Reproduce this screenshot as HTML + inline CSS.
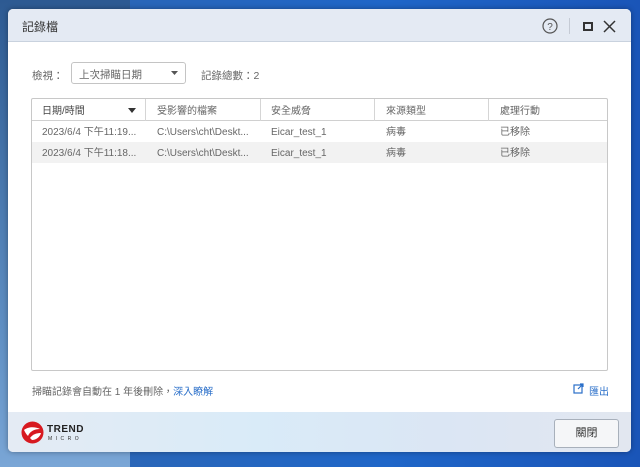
<!DOCTYPE html>
<html><head><meta charset="utf-8"><style>
*{margin:0;padding:0;box-sizing:border-box}
body{width:640px;height:467px;overflow:hidden;position:relative;font-family:"Liberation Sans","Noto Sans CJK TC",sans-serif;background:linear-gradient(90deg,#1c4f9a 0,#2a66b8 20%,#1f66c8 60%,#1a55b8 100%)}
.strip{position:absolute;left:0;top:0;width:130px;height:467px;background:linear-gradient(180deg,#2d5a92,#5f8fc3 70%,#7aa6d6)}
.dlg{position:absolute;left:8px;top:9px;width:623px;height:443px;background:#fff;border-radius:5px;overflow:hidden;box-shadow:0 0 6px rgba(0,0,0,.35)}
.title{height:33px;background:#e4eaf3;border-bottom:1px solid #c9d2de;font-size:12px;color:#333;padding:9px 0 0 14px}
.foot{position:absolute;left:0;top:403px;width:623px;height:40px;background:linear-gradient(90deg,#e4ebf4,#d9ebf8 40%,#dbe6f4 70%,#e2e7f0)}
.t{position:absolute;font-size:10.5px;color:#666;white-space:nowrap}
.tbl{position:absolute;left:23px;top:89px;width:577px;height:273px;border:1px solid #c8c8c8;border-radius:2px}
.hd{height:22px;border-bottom:1px solid #d0d0d0;position:relative}
.row{height:21px;position:relative}
.c{position:absolute;top:5px;font-size:10px;line-height:13px;height:13px;color:#666;white-space:nowrap}
.hd .c{top:6px}
.sep{position:absolute;top:0;width:1px;height:22px;background:#d5d5d5}
</style></head><body>
<div class="strip"></div>
<div class="dlg">
<div class="title">記錄檔</div>
<svg style="position:absolute;left:534px;top:9px" width="16" height="16"><circle cx="8" cy="8" r="7" fill="none" stroke="#555" stroke-width="1.2"/><text x="8" y="12" font-size="10" text-anchor="middle" fill="#555" font-family="Liberation Sans">?</text></svg>
<div style="position:absolute;left:561px;top:9px;width:1px;height:16px;background:#c5cbd5"></div>
<div style="position:absolute;left:575px;top:13px;width:10px;height:9px;border:2px solid #333"></div>
<svg style="position:absolute;left:595px;top:11px" width="13" height="13"><path d="M1 1L12 12M12 1L1 12" stroke="#333" stroke-width="1.5"/></svg>
<div class="t" style="left:24px;top:59px">檢視：</div>
<div style="position:absolute;left:63px;top:53px;width:115px;height:22px;border:1px solid #c4c4c4;border-radius:3px"></div>
<div class="t" style="left:71px;top:58px">上次掃瞄日期</div>
<svg style="position:absolute;left:163px;top:62px" width="7" height="4"><path d="M0 0L7 0L3.5 4Z" fill="#555"/></svg>
<div class="t" style="left:193px;top:59px">記錄總數：2</div>
<div class="tbl">
<div class="hd">
<div class="c" style="left:10px;color:#444">日期/時間</div>
<svg style="position:absolute;left:96px;top:9px" width="8" height="5"><path d="M0 0L8 0L4 5Z" fill="#333"/></svg>
<div class="sep" style="left:113px"></div><div class="c" style="left:125px">受影響的檔案</div>
<div class="sep" style="left:228px"></div><div class="c" style="left:239px">安全威脅</div>
<div class="sep" style="left:342px"></div><div class="c" style="left:354px">來源類型</div>
<div class="sep" style="left:456px"></div><div class="c" style="left:468px">處理行動</div>
</div>
<div class="row"><div class="c" style="left:10px">2023/6/4 下午11:19...</div><div class="c" style="left:125px">C:\Users\cht\Deskt...</div><div class="c" style="left:239px">Eicar_test_1</div><div class="c" style="left:354px">病毒</div><div class="c" style="left:468px">已移除</div></div>
<div class="row" style="background:#f2f2f2"><div class="c" style="left:10px">2023/6/4 下午11:18...</div><div class="c" style="left:125px">C:\Users\cht\Deskt...</div><div class="c" style="left:239px">Eicar_test_1</div><div class="c" style="left:354px">病毒</div><div class="c" style="left:468px">已移除</div></div>
</div>
<div class="t" style="left:24px;top:374px;font-size:10px">掃瞄記錄會自動在 1 年後刪除，<span style="color:#2a6fc9">深入瞭解</span></div>
<svg style="position:absolute;left:565px;top:374px" width="11" height="11"><rect x="1" y="2" width="8" height="8" fill="none" stroke="#2a6fc9" stroke-width="1.2"/><path d="M5 6L10 1M7 1H10V4" stroke="#2a6fc9" stroke-width="1.2" fill="none"/></svg>
<div class="t" style="left:581px;top:374px;color:#2a6fc9;font-size:10px">匯出</div>
<div class="foot">
<svg style="position:absolute;left:13px;top:9px" width="23" height="23"><circle cx="11.5" cy="11.5" r="11" fill="#d71920"/><path d="M3 9C8 5 15 6 19 8C14 8 9 10 7 15C5 13 4 11 3 9Z" fill="#fff"/><path d="M9 17C12 13 16 12 20 12C19 16 15 19 11 19Z" fill="#fff"/></svg>
<div style="position:absolute;left:39px;top:12px;font-size:10px;font-weight:bold;color:#222;letter-spacing:.5px">TREND</div>
<div style="position:absolute;left:40px;top:24px;font-size:5px;color:#333;letter-spacing:3.5px">MICRO</div>
<div style="position:absolute;left:546px;top:7px;width:65px;height:29px;border:1px solid #a8b0bb;border-radius:3px;background:#f5f6f8;font-size:11px;color:#333;text-align:center;line-height:27px">關閉</div>
</div>
</div>
</body></html>
